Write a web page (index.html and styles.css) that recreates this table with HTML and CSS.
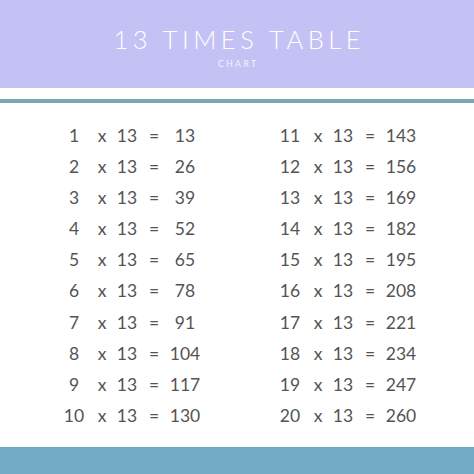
FILE: index.html
```html
<!DOCTYPE html>
<html>
<head>
<meta charset="utf-8">
<link rel="stylesheet" href="styles.css">
</head>
<body>
<div class="page">
  <header class="header">
    <h1 class="title">13 TIMES TABLE</h1>
    <div class="subtitle">CHART</div>
  </header>
  <div class="rule"></div>
  <main class="content">
    <div class="table">
      <span>1</span><span>x</span><span>13</span><span>=</span><span>13</span>
      <span>2</span><span>x</span><span>13</span><span>=</span><span>26</span>
      <span>3</span><span>x</span><span>13</span><span>=</span><span>39</span>
      <span>4</span><span>x</span><span>13</span><span>=</span><span>52</span>
      <span>5</span><span>x</span><span>13</span><span>=</span><span>65</span>
      <span>6</span><span>x</span><span>13</span><span>=</span><span>78</span>
      <span>7</span><span>x</span><span>13</span><span>=</span><span>91</span>
      <span>8</span><span>x</span><span>13</span><span>=</span><span>104</span>
      <span>9</span><span>x</span><span>13</span><span>=</span><span>117</span>
      <span>10</span><span>x</span><span>13</span><span>=</span><span>130</span>
    </div>
    <div class="table">
      <span>11</span><span>x</span><span>13</span><span>=</span><span>143</span>
      <span>12</span><span>x</span><span>13</span><span>=</span><span>156</span>
      <span>13</span><span>x</span><span>13</span><span>=</span><span>169</span>
      <span>14</span><span>x</span><span>13</span><span>=</span><span>182</span>
      <span>15</span><span>x</span><span>13</span><span>=</span><span>195</span>
      <span>16</span><span>x</span><span>13</span><span>=</span><span>208</span>
      <span>17</span><span>x</span><span>13</span><span>=</span><span>221</span>
      <span>18</span><span>x</span><span>13</span><span>=</span><span>234</span>
      <span>19</span><span>x</span><span>13</span><span>=</span><span>247</span>
      <span>20</span><span>x</span><span>13</span><span>=</span><span>260</span>
    </div>
  </main>
  <footer class="footer"></footer>
</div>
</body>
</html>
```
FILE: styles.css
```css
html, body {
  margin: 0;
  padding: 0;
  background: #ffffff;
}
.page {
  width: 474px;
  height: 474px;
  display: flex;
  flex-direction: column;
  overflow: hidden;
  font-family: Lato, "Liberation Sans", sans-serif;
}
.header {
  height: 88px;
  background: #c4c2f5;
  display: flex;
  flex-direction: column;
  align-items: center;
  box-sizing: border-box;
  padding-top: 24px;
}
.title {
  margin: 0;
  font-weight: 300;
  font-size: 25.5px;
  line-height: 30px;
  letter-spacing: 4.5px;
  margin-right: -4.5px;
  color: #ffffff;
}
.subtitle {
  margin-top: 5px;
  font-size: 8.5px;
  line-height: 10px;
  letter-spacing: 2.5px;
  margin-right: -2.5px;
  color: rgba(255,255,255,0.85);
}
.rule {
  margin-top: 11px;
  height: 4px;
  background: #78a9b1;
}
.content {
  flex: 1;
  display: flex;
  gap: 76px;
  padding-left: 60px;
  padding-top: 16.5px;
  color: #545454;
}
.table {
  display: grid;
  grid-template-columns: 28px 28px 22px 32px 30px;
  grid-auto-rows: 31.2px;
  font-size: 17.5px;
  line-height: 31.2px;
  text-align: center;
  white-space: nowrap;
}
.table span {
  display: flex;
  justify-content: center;
}
.footer {
  height: 27.5px;
  background: #72abc3;
}
```
